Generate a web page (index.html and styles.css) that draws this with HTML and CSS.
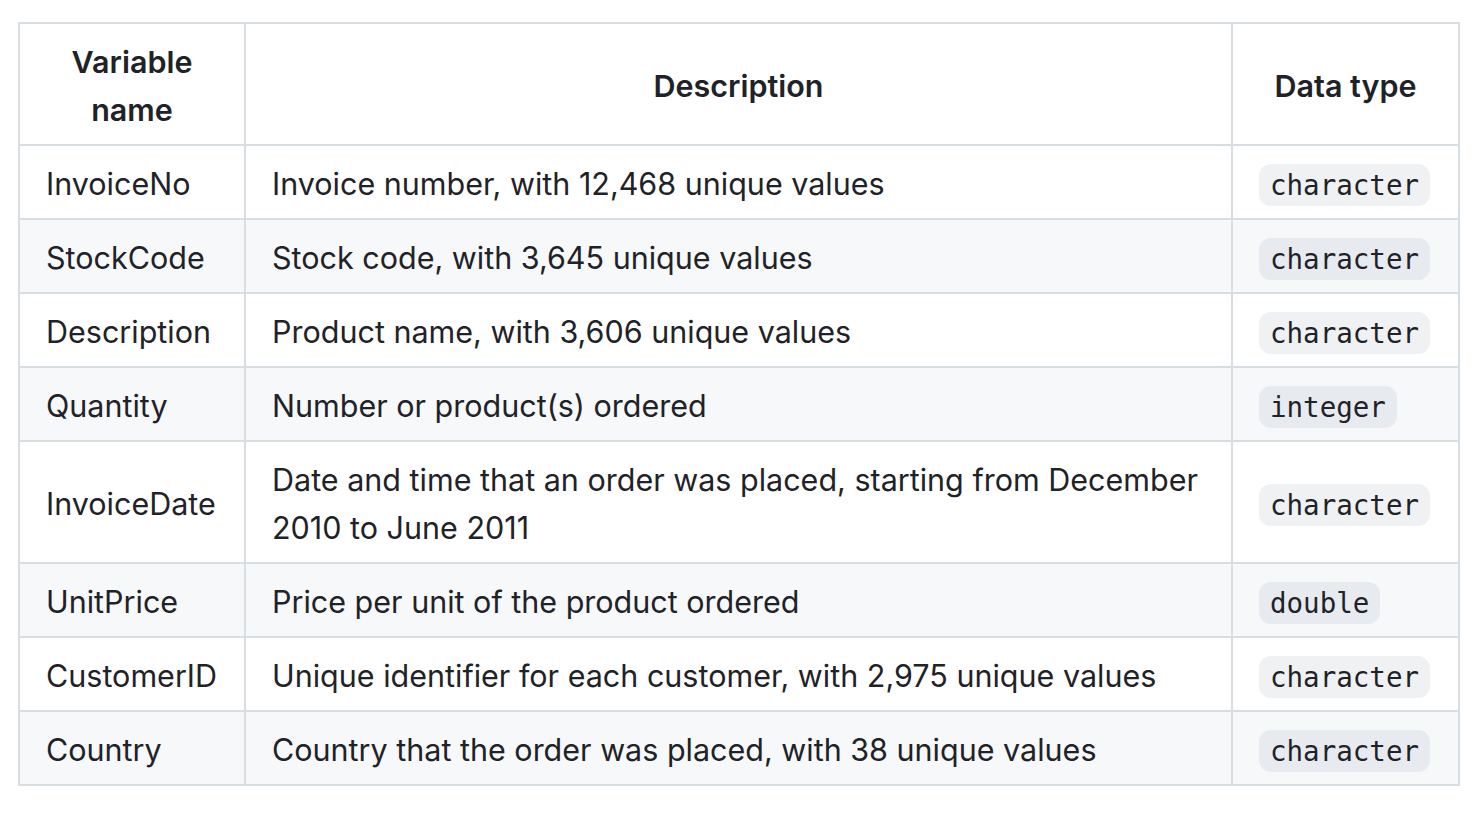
FILE: index.html
```html
<!DOCTYPE html>
<html>
<head>
<meta charset="utf-8">
<link rel="stylesheet" href="styles.css">
</head>
<body>
<div class="page">
<table class="data-table">
  <colgroup>
    <col class="c1">
    <col class="c2">
    <col class="c3">
  </colgroup>
  <thead>
    <tr><th>Variable name</th><th>Description</th><th>Data type</th></tr>
  </thead>
  <tbody>
    <tr><td>InvoiceNo</td><td>Invoice number, with 12,468 unique values</td><td><code>character</code></td></tr>
    <tr><td>StockCode</td><td>Stock code, with 3,645 unique values</td><td><code>character</code></td></tr>
    <tr><td>Description</td><td>Product name, with 3,606 unique values</td><td><code>character</code></td></tr>
    <tr><td>Quantity</td><td>Number or product(s) ordered</td><td><code>integer</code></td></tr>
    <tr><td>InvoiceDate</td><td>Date and time that an order was placed, starting from December 2010 to June 2011</td><td><code>character</code></td></tr>
    <tr><td>UnitPrice</td><td>Price per unit of the product ordered</td><td><code>double</code></td></tr>
    <tr><td>CustomerID</td><td>Unique identifier for each customer, with 2,975 unique values</td><td><code>character</code></td></tr>
    <tr><td>Country</td><td>Country that the order was placed, with 38 unique values</td><td><code>character</code></td></tr>
  </tbody>
</table>
</div>
</body>
</html>
```

FILE: styles.css
```css
html, body {
  margin: 0;
  padding: 0;
  background: #ffffff;
}
.page {
  padding: 22px 0 0 18px;
}
.data-table {
  border-collapse: collapse;
  border-spacing: 0;
  table-layout: fixed;
  width: 1440px;
  font-family: Inter, "Liberation Sans", sans-serif;
  font-size: 30.5px;
  line-height: 48px;
  color: #1f2328;
}
.c1 { width: 226px; }
.c2 { width: 987px; }
.c3 { width: 227px; }
.data-table tr {
  background: #ffffff;
  border-top: 2px solid #d8dde2;
}
.data-table tbody tr:nth-child(2n) {
  background: #f6f8fa;
}
.data-table th,
.data-table td {
  border: 2px solid #d8dde2;
  padding: 14px 26px 10px;
  vertical-align: middle;
}
.data-table th {
  font-weight: 600;
  text-align: center;
}
.data-table td {
  text-align: left;
}
.data-table code {
  font-family: "DejaVu Sans Mono", "Liberation Mono", monospace;
  font-size: 27.5px;
  background: rgba(175, 184, 193, 0.2);
  border-radius: 12px;
  padding: 5px 11px;
  line-height: 1;
  color: #1f2328;
}
```
